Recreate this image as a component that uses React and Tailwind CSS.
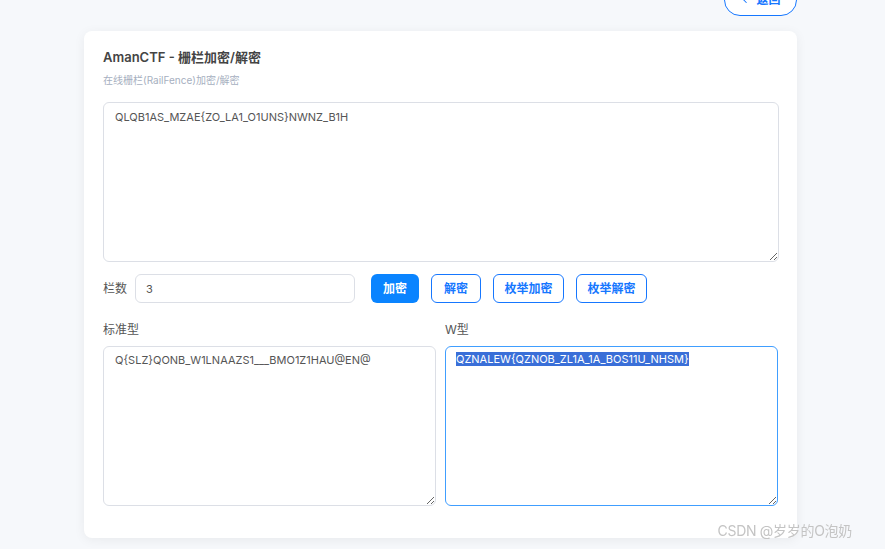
import React from 'react';

const font = { fontFamily: 'Inter, "Noto Sans CJK SC", sans-serif' };

const OutlineButton = ({ children, className = '' }) => (
  <button
    className={`h-[29px] rounded-md border border-[#1677ff] bg-white text-[12px] font-bold text-[#1677ff] ${className}`}
  >
    {children}
  </button>
);

const App = () => {
  return (
    <div className="min-h-[549px] w-full overflow-hidden bg-[#f6f8fb] text-[#333]" style={font}>
      {/* Back button (cut off at the top) */}
      <div className="ml-[84px] flex w-[713px] justify-end">
        <button className="-mt-4 flex h-8 w-[73px] items-center justify-center gap-[6px] rounded-full border border-[#1677ff] bg-white text-[12px] font-bold text-[#1677ff]">
          <svg width="10" height="10" viewBox="0 0 24 24" fill="none" stroke="currentColor" strokeWidth="2.5" strokeLinecap="round" strokeLinejoin="round">
            <path d="M15 18l-6-6 6-6" />
          </svg>
          <span>返回</span>
        </button>
      </div>

      {/* Card */}
      <div className="ml-[84px] mt-[15px] w-[713px] rounded-lg bg-white px-[19px] pb-[32px] pt-[17px] shadow-[0_2px_12px_rgba(0,0,0,0.06)]">
        <h1 className="text-[13px] font-semibold leading-[18px] text-[#444]">AmanCTF - 栅栏加密/解密</h1>
        <p className="mt-[7px] text-[10px] leading-[14px] text-[#a6afc0]">在线栅栏(RailFence)加密/解密</p>

        <textarea
          className="mt-[15px] block h-[160px] w-[676px] resize rounded-md border border-[#dcdfe6] px-[11px] py-[6px] text-[11px] leading-[16px] text-[#555] outline-none"
          defaultValue="QLQB1AS_MZAE{ZO_LA1_O1UNS}NWNZ_B1H"
        />

        <div className="mt-[12px] flex items-center">
          <span className="text-[12px] text-[#555]">栏数</span>
          <input
            className="ml-[8px] h-[29px] w-[220px] rounded-md border border-[#dcdfe6] px-[10px] text-[11px] text-[#555] outline-none"
            defaultValue="3"
          />
          <button className="ml-[16px] h-[29px] w-[48px] rounded-md bg-[#0a84ff] text-[12px] font-bold text-white">加密</button>
          <OutlineButton className="ml-[12px] w-[50px]">解密</OutlineButton>
          <OutlineButton className="ml-[12px] w-[71px]">枚举加密</OutlineButton>
          <OutlineButton className="ml-[12px] w-[71px]">枚举解密</OutlineButton>
        </div>

        <div className="mt-[19px] grid grid-cols-2 gap-[9px]">
          <div>
            <div className="text-[12px] leading-[16px] text-[#555]">标准型</div>
            <textarea
              className="mt-[8px] block h-[160px] w-full resize rounded-md border border-[#dcdfe6] px-[11px] py-[5px] text-[11px] leading-[16px] text-[#555] outline-none"
              defaultValue="Q{SLZ}QONB_W1LNAAZS1___BMO1Z1HAU@EN@"
            />
          </div>
          <div>
            <div className="text-[12px] leading-[16px] text-[#555]">W型</div>
            <div className="mt-[8px] h-[160px] w-full resize overflow-auto rounded-md border border-[#409eff] px-[10px] py-[4px] text-[11px] leading-[16px] text-[#555]">
              <span className="bg-[#3a6fd8] text-white">QZNALEW{'{'}QZNOB_ZL1A_1A_BOS11U_NHSM{'}'}</span>
            </div>
          </div>
        </div>
      </div>

      <div className="pointer-events-none fixed bottom-[8px] right-[33px] text-[14px] tracking-[-0.3px] text-[#c4c4c4]">CSDN @岁岁的O泡奶</div>
    </div>
  );
};

export default App;
